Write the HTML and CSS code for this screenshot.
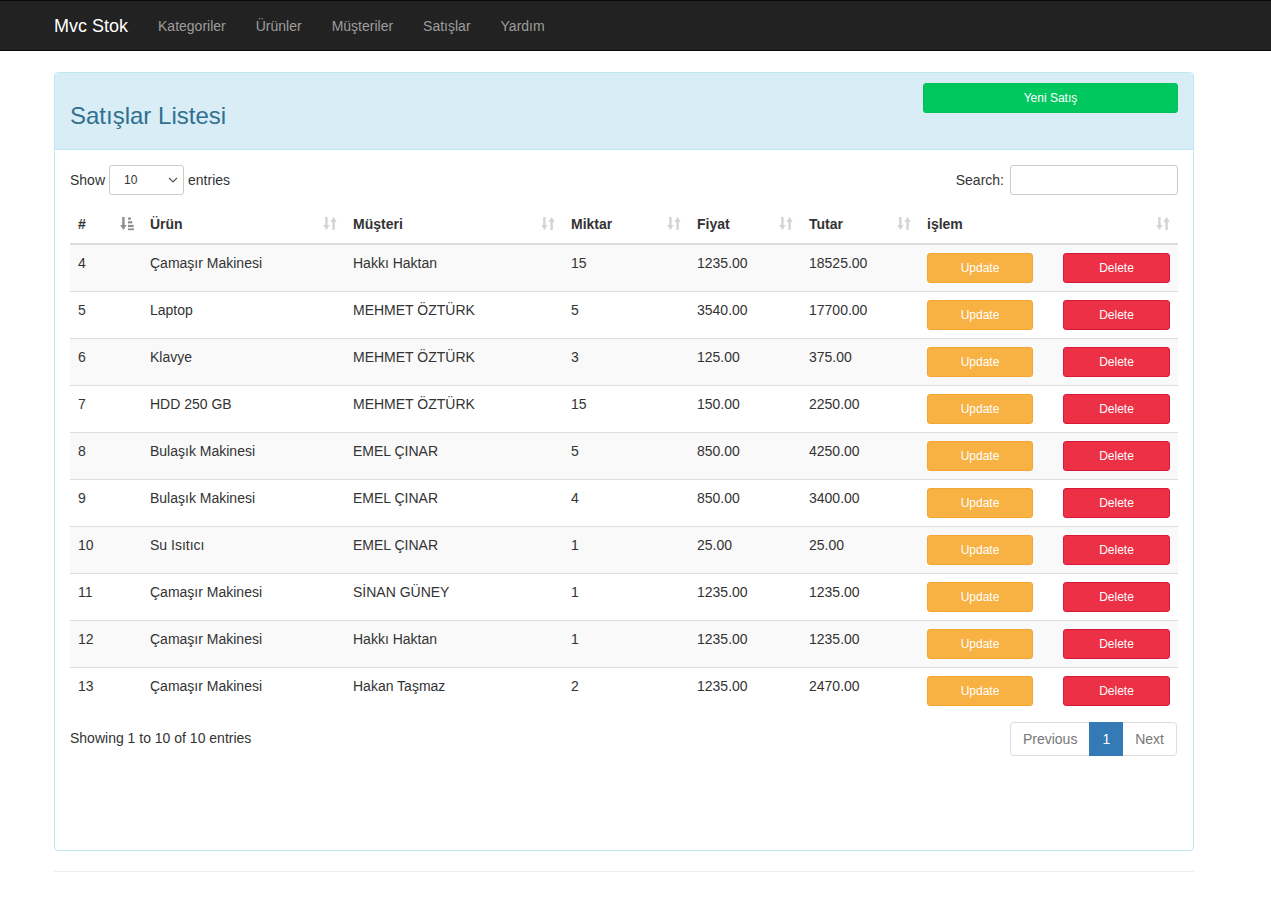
FILE: index.html
```html
<!DOCTYPE html>
<html lang="tr">
<head>
<meta charset="utf-8">
<title>Satışlar Listesi - Mvc Stok</title>
<link rel="stylesheet" href="styles.css">
</head>
<body>
<nav class="navbar">
  <div class="nav-inner">
    <a class="brand" href="#">Mvc Stok</a>
    <ul class="nav-links">
      <li><a href="#">Kategoriler</a></li>
      <li><a href="#">Ürünler</a></li>
      <li><a href="#">Müşteriler</a></li>
      <li><a href="#">Satışlar</a></li>
      <li><a href="#">Yardım</a></li>
    </ul>
  </div>
</nav>

<div class="container">
  <div class="panel">
    <div class="panel-heading">
      <h3 class="panel-title">Satışlar Listesi</h3>
      <a class="btn btn-new" href="#">Yeni Satış</a>
    </div>
    <div class="panel-body">
      <div class="dt-controls">
        <label class="dt-length">Show
          <span class="select-wrap">
            <select class="dt-select"><option>10</option><option>25</option><option>50</option><option>100</option></select>
            <svg class="chev" width="10" height="6" viewBox="0 0 10 6"><path d="M1 1 L5 5 L9 1" fill="none" stroke="#555" stroke-width="1.2"/></svg>
          </span>
          entries</label>
        <label class="dt-search">Search: <input type="search" class="dt-input"></label>
      </div>

      <table class="table">
        <colgroup>
          <col style="width:72px"><col style="width:203px"><col style="width:218px"><col style="width:126px"><col style="width:112px"><col style="width:118px"><col style="width:136px"><col style="width:123px">
        </colgroup>
        <thead>
          <tr>
            <th>#<svg class="sort-ico active" width="14" height="15" viewBox="0 0 14 15"><rect x="2.2" y="1" width="2.4" height="9.5" fill="currentColor"/><path d="M0.2 9 H6.6 L3.4 14 Z" fill="currentColor"/><rect x="8" y="1.5" width="3" height="2.2" fill="currentColor"/><rect x="8" y="5.2" width="4.3" height="2.2" fill="currentColor"/><rect x="8" y="8.9" width="5.6" height="2.2" fill="currentColor"/><rect x="8" y="12.4" width="6" height="1.8" fill="currentColor"/></svg></th>
            <th>Ürün<svg class="sort-ico" width="14" height="15" viewBox="0 0 14 15"><rect x="2.2" y="1" width="2.4" height="9.5" fill="currentColor"/><path d="M0.2 9 H6.6 L3.4 14 Z" fill="currentColor"/><rect x="9.4" y="4.5" width="2.4" height="9.5" fill="currentColor"/><path d="M7.4 6 H13.8 L10.6 1 Z" fill="currentColor"/></svg></th>
            <th>Müşteri<svg class="sort-ico" width="14" height="15" viewBox="0 0 14 15"><rect x="2.2" y="1" width="2.4" height="9.5" fill="currentColor"/><path d="M0.2 9 H6.6 L3.4 14 Z" fill="currentColor"/><rect x="9.4" y="4.5" width="2.4" height="9.5" fill="currentColor"/><path d="M7.4 6 H13.8 L10.6 1 Z" fill="currentColor"/></svg></th>
            <th>Miktar<svg class="sort-ico" width="14" height="15" viewBox="0 0 14 15"><rect x="2.2" y="1" width="2.4" height="9.5" fill="currentColor"/><path d="M0.2 9 H6.6 L3.4 14 Z" fill="currentColor"/><rect x="9.4" y="4.5" width="2.4" height="9.5" fill="currentColor"/><path d="M7.4 6 H13.8 L10.6 1 Z" fill="currentColor"/></svg></th>
            <th>Fiyat<svg class="sort-ico" width="14" height="15" viewBox="0 0 14 15"><rect x="2.2" y="1" width="2.4" height="9.5" fill="currentColor"/><path d="M0.2 9 H6.6 L3.4 14 Z" fill="currentColor"/><rect x="9.4" y="4.5" width="2.4" height="9.5" fill="currentColor"/><path d="M7.4 6 H13.8 L10.6 1 Z" fill="currentColor"/></svg></th>
            <th>Tutar<svg class="sort-ico" width="14" height="15" viewBox="0 0 14 15"><rect x="2.2" y="1" width="2.4" height="9.5" fill="currentColor"/><path d="M0.2 9 H6.6 L3.4 14 Z" fill="currentColor"/><rect x="9.4" y="4.5" width="2.4" height="9.5" fill="currentColor"/><path d="M7.4 6 H13.8 L10.6 1 Z" fill="currentColor"/></svg></th>
            <th colspan="2">işlem<svg class="sort-ico" width="14" height="15" viewBox="0 0 14 15"><rect x="2.2" y="1" width="2.4" height="9.5" fill="currentColor"/><path d="M0.2 9 H6.6 L3.4 14 Z" fill="currentColor"/><rect x="9.4" y="4.5" width="2.4" height="9.5" fill="currentColor"/><path d="M7.4 6 H13.8 L10.6 1 Z" fill="currentColor"/></svg></th>
          </tr>
        </thead>
        <tbody>
          <tr><td>4</td><td>Çamaşır Makinesi</td><td>Hakkı Haktan</td><td>15</td><td>1235.00</td><td>18525.00</td><td><a class="btn btn-update" href="#">Update</a></td><td><a class="btn btn-delete" href="#">Delete</a></td></tr>
          <tr><td>5</td><td>Laptop</td><td>MEHMET ÖZTÜRK</td><td>5</td><td>3540.00</td><td>17700.00</td><td><a class="btn btn-update" href="#">Update</a></td><td><a class="btn btn-delete" href="#">Delete</a></td></tr>
          <tr><td>6</td><td>Klavye</td><td>MEHMET ÖZTÜRK</td><td>3</td><td>125.00</td><td>375.00</td><td><a class="btn btn-update" href="#">Update</a></td><td><a class="btn btn-delete" href="#">Delete</a></td></tr>
          <tr><td>7</td><td>HDD 250 GB</td><td>MEHMET ÖZTÜRK</td><td>15</td><td>150.00</td><td>2250.00</td><td><a class="btn btn-update" href="#">Update</a></td><td><a class="btn btn-delete" href="#">Delete</a></td></tr>
          <tr><td>8</td><td>Bulaşık Makinesi</td><td>EMEL ÇINAR</td><td>5</td><td>850.00</td><td>4250.00</td><td><a class="btn btn-update" href="#">Update</a></td><td><a class="btn btn-delete" href="#">Delete</a></td></tr>
          <tr><td>9</td><td>Bulaşık Makinesi</td><td>EMEL ÇINAR</td><td>4</td><td>850.00</td><td>3400.00</td><td><a class="btn btn-update" href="#">Update</a></td><td><a class="btn btn-delete" href="#">Delete</a></td></tr>
          <tr><td>10</td><td>Su Isıtıcı</td><td>EMEL ÇINAR</td><td>1</td><td>25.00</td><td>25.00</td><td><a class="btn btn-update" href="#">Update</a></td><td><a class="btn btn-delete" href="#">Delete</a></td></tr>
          <tr><td>11</td><td>Çamaşır Makinesi</td><td>SİNAN GÜNEY</td><td>1</td><td>1235.00</td><td>1235.00</td><td><a class="btn btn-update" href="#">Update</a></td><td><a class="btn btn-delete" href="#">Delete</a></td></tr>
          <tr><td>12</td><td>Çamaşır Makinesi</td><td>Hakkı Haktan</td><td>1</td><td>1235.00</td><td>1235.00</td><td><a class="btn btn-update" href="#">Update</a></td><td><a class="btn btn-delete" href="#">Delete</a></td></tr>
          <tr><td>13</td><td>Çamaşır Makinesi</td><td>Hakan Taşmaz</td><td>2</td><td>1235.00</td><td>2470.00</td><td><a class="btn btn-update" href="#">Update</a></td><td><a class="btn btn-delete" href="#">Delete</a></td></tr>
        </tbody>
      </table>

      <div class="dt-footer">
        <div class="dt-info">Showing 1 to 10 of 10 entries</div>
        <ul class="pagination">
          <li class="disabled"><a href="#">Previous</a></li>
          <li class="active"><a href="#">1</a></li>
          <li class="disabled"><a href="#">Next</a></li>
        </ul>
      </div>
    </div>
  </div>
  <hr class="footer-line">
</div>
</body>
</html>
```

FILE: styles.css
```css
* { box-sizing: border-box; }

body {
  margin: 0;
  font-family: "Liberation Sans", Arial, Helvetica, sans-serif;
  font-size: 14px;
  line-height: 20px;
  color: #333;
  background: #fff;
}

a { text-decoration: none; }

.navbar {
  height: 51px;
  background: #222;
  border-top: 1px solid #080808;
  border-bottom: 1px solid #080808;
}

.nav-inner {
  margin-left: 39px;
  display: flex;
  align-items: center;
  height: 49px;
}

.brand {
  color: #fff;
  font-size: 18px;
  line-height: 20px;
  padding: 14px 15px;
}

.nav-links {
  list-style: none;
  margin: 0;
  padding: 0;
  display: flex;
}

.nav-links a {
  display: block;
  color: #9d9d9d;
  padding: 14px 15px;
  line-height: 20px;
}

.container {
  margin-left: 54px;
  width: 1140px;
  padding-top: 21px;
}

.panel {
  border: 1px solid #bce8f1;
  border-radius: 4px;
  background: #fff;
  margin-bottom: 20px;
}

.panel-heading {
  background: #d9edf7;
  border-bottom: 1px solid #bce8f1;
  border-radius: 3px 3px 0 0;
  padding: 10px 15px;
  height: 77px;
  display: flex;
  justify-content: space-between;
  align-items: flex-start;
}

.panel-title {
  margin: 20px 0 0;
  font-size: 24px;
  line-height: 26px;
  font-weight: 500;
  color: #31708f;
}

.btn {
  display: inline-block;
  text-align: center;
  font-size: 12px;
  line-height: 18px;
  padding: 5px 10px;
  border: 1px solid transparent;
  border-radius: 3px;
  color: #fff;
}

.btn-new {
  width: 255px;
  height: 30px;
  background: #00c85f;
  border-color: #00bf57;
}

.panel-body {
  padding: 15px;
  min-height: 700px;
}

.dt-controls {
  display: flex;
  justify-content: space-between;
  align-items: center;
  height: 30px;
}

.dt-length, .dt-search {
  display: flex;
  align-items: center;
  font-weight: normal;
  line-height: 18px;
}

.select-wrap {
  position: relative;
  display: inline-block;
  margin: 0 4px;
}

.dt-select {
  appearance: none;
  -webkit-appearance: none;
  width: 75px;
  height: 30px;
  padding: 0 0 0 14px;
  font-family: "Liberation Sans", Arial, sans-serif;
  font-size: 12px;
  color: #333;
  background: #fff;
  border: 1px solid #ccc;
  border-radius: 3px;
}

.chev {
  position: absolute;
  right: 6px;
  top: 12px;
  pointer-events: none;
}

.dt-input {
  width: 168px;
  height: 30px;
  margin-left: 6px;
  border: 1px solid #ccc;
  border-radius: 3px;
  padding: 5px 10px;
  font-size: 12px;
}

.table {
  width: 1108px;
  border-collapse: collapse;
  border-spacing: 0;
  table-layout: fixed;
  margin-top: 12px;
}

.table th {
  position: relative;
  text-align: left;
  font-weight: bold;
  padding: 7px 30px 9px 8px;
  line-height: 20px;
  border-bottom: 2px solid #ddd;
  vertical-align: bottom;
}

.sort-ico {
  position: absolute;
  right: 8px;
  top: 9px;
  color: #d4d4d4;
}

.sort-ico.active { color: #8e8e8e; }

.table td {
  padding: 8px;
  line-height: 20px;
  border-top: 1px solid #ddd;
  vertical-align: top;
  height: 47px;
}

.table tbody tr:nth-child(odd) td { background: #f9f9f9; }

.btn-update {
  width: 106px;
  height: 30px;
  background: #f8b143;
  border-color: #f3a631;
}

.btn-delete {
  width: 107px;
  height: 30px;
  background: #ec3046;
  border-color: #d9183a;
}

.dt-footer {
  display: flex;
  justify-content: space-between;
  align-items: flex-start;
  margin-top: 6px;
}

.dt-info { padding-top: 7px; }

.pagination {
  list-style: none;
  display: flex;
  margin: 1px 1px 0 0;
  padding: 0;
}

.pagination li a {
  display: block;
  padding: 6px 12px;
  line-height: 20px;
  border: 1px solid #ddd;
  margin-left: -1px;
  color: #337ab7;
  background: #fff;
}

.pagination li:first-child a { margin-left: 0; border-radius: 4px 0 0 4px; }
.pagination li:last-child a { border-radius: 0 4px 4px 0; }

.pagination li.disabled a { color: #777; }

.pagination li.active a {
  background: #337ab7;
  border-color: #337ab7;
  color: #fff;
  position: relative;
  z-index: 1;
}

.footer-line {
  margin: 0;
  border: 0;
  border-top: 1px solid #eee;
}
```
